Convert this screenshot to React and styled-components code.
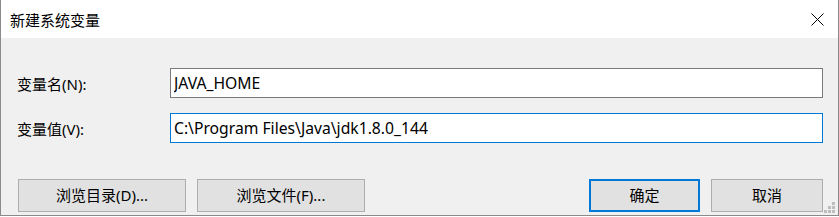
import React from 'react';
import styled, { createGlobalStyle } from 'styled-components';

const GlobalStyle = createGlobalStyle`
  html, body {
    margin: 0;
    padding: 0;
    background: #ffffff;
  }
  * {
    box-sizing: border-box;
  }
`;

const uiFont = `"Noto Sans", "Noto Sans CJK SC", sans-serif`;

export default function App() {
  return (
    <>
      <GlobalStyle />
      <Window>
        <TitleBar>
          <Title>新建系统变量</Title>
          <CloseButton aria-label="关闭">
            <svg width="13" height="13" viewBox="0 0 13 13">
              <path d="M0.5 0.5 L12.5 12.5 M12.5 0.5 L0.5 12.5" stroke="#000" strokeWidth="1" fill="none" />
            </svg>
          </CloseButton>
        </TitleBar>

        <Body>
          <FieldRow>
            <Label>变量名(N):</Label>
            <TextInput readOnly defaultValue="JAVA_HOME" />
          </FieldRow>
          <FieldRow>
            <Label>变量值(V):</Label>
            <TextInput readOnly focused defaultValue={'C:\\Program Files\\Java\\jdk1.8.0_144'} />
          </FieldRow>

          <ButtonRow>
            <ButtonGroup>
              <Button $width={168}>浏览目录(D)...</Button>
              <Button $width={168}>浏览文件(F)...</Button>
            </ButtonGroup>
            <ButtonGroup>
              <Button $width={111} $primary>确定</Button>
              <Button $width={112}>取消</Button>
            </ButtonGroup>
          </ButtonRow>
        </Body>

        <Grip width="12" height="11" viewBox="0 0 12 11">
          <rect x="8" y="0" width="3" height="3" fill="#bdbdbd" />
          <rect x="4" y="4" width="3" height="3" fill="#bdbdbd" />
          <rect x="8" y="4" width="3" height="3" fill="#bdbdbd" />
          <rect x="0" y="8" width="3" height="3" fill="#bdbdbd" />
          <rect x="4" y="8" width="3" height="3" fill="#bdbdbd" />
          <rect x="8" y="8" width="3" height="3" fill="#bdbdbd" />
        </Grip>
      </Window>
    </>
  );
}

const Window = styled.div`
  position: relative;
  width: 839px;
  height: 216px;
  display: flex;
  flex-direction: column;
  background: #f0f0f0;
  border-left: 1px solid #8a8a8a;
  border-right: 1px solid #8a8a8a;
  border-bottom: 1px solid #8a8a8a;
  font-family: ${uiFont};
  font-size: 15px;
  color: #000;
`;

const TitleBar = styled.div`
  height: 38px;
  flex: none;
  display: flex;
  align-items: center;
  justify-content: space-between;
  background: #ffffff;
  padding-left: 9px;
`;

const Title = styled.span`
  font-size: 15px;
  line-height: 1;
  padding-top: 2px;
`;

const CloseButton = styled.div`
  width: 40px;
  height: 38px;
  display: flex;
  align-items: center;
  justify-content: center;
  margin-right: 1px;
`;

const Body = styled.div`
  flex: 1;
  padding: 30px 15px 0 16px;
  display: flex;
  flex-direction: column;
`;

const FieldRow = styled.div`
  display: grid;
  grid-template-columns: 153px 1fr;
  align-items: center;
  height: 30px;
  margin-bottom: 15px;

  &:last-of-type {
    margin-bottom: 0;
  }
`;

const Label = styled.label`
  font-size: 15px;
  line-height: 1;
  padding-top: 2px;
`;

const TextInput = styled.input.attrs(() => ({ type: 'text' }))`
  height: 30px;
  width: 100%;
  margin: 0;
  padding: 0 3px;
  border: 1px solid ${({ focused }) => (focused ? '#0078d7' : '#7a7a7a')};
  background: #ffffff;
  font-family: ${uiFont};
  font-size: 15.7px;
  color: #000;
  outline: none;
`;

const ButtonRow = styled.div`
  margin-top: 21px;
  padding-left: 1px;
  display: flex;
  justify-content: space-between;
`;

const ButtonGroup = styled.div`
  display: flex;
  gap: 11px;
`;

const Button = styled.div`
  width: ${({ $width }) => $width}px;
  height: 33px;
  display: flex;
  align-items: center;
  justify-content: center;
  background: #e1e1e1;
  border: ${({ $primary }) => ($primary ? '2px solid #0078d7' : '1px solid #adadad')};
  font-size: 15px;
  line-height: 1;
`;

const Grip = styled.svg`
  position: absolute;
  right: 2px;
  bottom: 2px;
`;
